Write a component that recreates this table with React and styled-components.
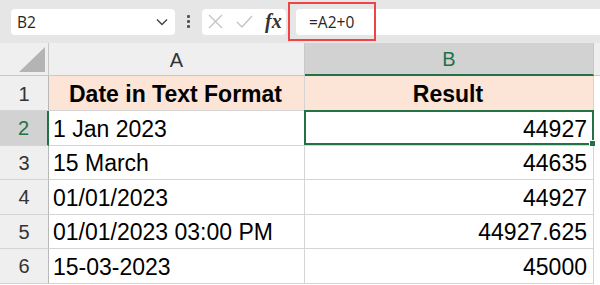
import React from "react";
import styled, { createGlobalStyle } from "styled-components";

const Global = createGlobalStyle`
  html, body { margin: 0; padding: 0; background: #fff; }
  body { width: 600px; height: 285px; overflow: hidden; }
`;

const Page = styled.div`
  position: relative;
  width: 600px;
  height: 285px;
  background: #fff;
  font-family: "Liberation Sans", Arial, sans-serif;
`;

const Toolbar = styled.div`
  display: flex;
  align-items: center;
  height: 43px;
  padding-left: 11px;
  background: #e6e6e6;
  font-family: "Open Sans", "Noto Sans", sans-serif;
`;

const NameBox = styled.div`
  display: flex;
  align-items: center;
  justify-content: space-between;
  box-sizing: border-box;
  width: 164px;
  height: 26px;
  padding: 0 7px 0 6px;
  background: #fff;
  border-radius: 4px;
  font-size: 15.5px;
  color: #262626;
`;

const Dots = styled.div`
  display: flex;
  flex-direction: column;
  align-items: center;
  gap: 2px;
  width: 27px;
  span {
    width: 3px;
    height: 3px;
    border-radius: 1px;
    background: #555;
  }
`;

const FxGroup = styled.div`
  display: flex;
  align-items: center;
  box-sizing: border-box;
  width: 84px;
  height: 26px;
  padding-left: 6px;
  gap: 13px;
  background: #fff;
  border-radius: 4px;
`;

const Fx = styled.span`
  font-family: "Liberation Serif", "Times New Roman", serif;
  font-style: italic;
  font-weight: 700;
  font-size: 20px;
  color: #333;
  margin-left: -1px;
`;

const FormulaInput = styled.div`
  flex: 1;
  display: flex;
  align-items: center;
  height: 26px;
  margin-left: 10px;
  padding-left: 13px;
  background: #fff;
  border-radius: 4px 0 0 4px;
  font-size: 15.5px;
  color: #262626;
`;

const Highlight = styled.div`
  position: absolute;
  left: 288px;
  top: 2px;
  width: 88px;
  height: 39px;
  box-sizing: border-box;
  border: 2px solid #ee4347;
  pointer-events: none;
`;

const Sheet = styled.div`
  display: grid;
  grid-template-columns: 49px 256px 289px 1fr;
  grid-template-rows: 33px 35px repeat(5, 34.5px);
`;

const Corner = styled.div`
  position: relative;
  background: #efefef;
  border-right: 1px solid #c8c8c8;
  border-bottom: 1px solid #c8c8c8;
  box-sizing: border-box;
`;

const ColHead = styled.div`
  display: flex;
  align-items: center;
  justify-content: center;
  box-sizing: border-box;
  padding-top: 2px;
  font-size: 20px;
  background: ${(p) => (p.$active ? "#d2d2d2" : "#efefef")};
  color: ${(p) => (p.$active ? "#217346" : "#333")};
  border-right: 1px solid #c8c8c8;
  border-bottom: ${(p) => (p.$active ? "2px solid #217346" : "1px solid #c8c8c8")};
`;

const Filler = styled.div`
  box-sizing: border-box;
  background: ${(p) => (p.$head ? "#efefef" : "#fff")};
  border-bottom: ${(p) => (p.$head ? "1px solid #c8c8c8" : "none")};
`;

const RowHead = styled.div`
  display: flex;
  align-items: center;
  justify-content: center;
  box-sizing: border-box;
  padding-top: 2px;
  font-size: 20px;
  background: ${(p) => (p.$active ? "#d2d2d2" : "#efefef")};
  color: ${(p) => (p.$active ? "#217346" : "#333")};
  border-right: ${(p) => (p.$active ? "2px solid #217346" : "1px solid #b8b8b8")};
  border-bottom: 1px solid #d4d4d4;
`;

const Cell = styled.div`
  position: relative;
  display: flex;
  align-items: center;
  box-sizing: border-box;
  padding: 3px 6px 0 4px;
  font-size: 23px;
  color: #000;
  white-space: nowrap;
  justify-content: ${(p) => (p.$head ? "center" : p.$num ? "flex-end" : "flex-start")};
  font-weight: ${(p) => (p.$head ? 700 : 400)};
  background: ${(p) => (p.$head ? "#fce4d6" : "#fff")};
  border-right: 1px solid #d4d4d4;
  border-bottom: 1px solid #d4d4d4;
`;

const Selection = styled.div`
  position: absolute;
  inset: -1px -1px 0 -1px;
  border: 2px solid #217346;
  pointer-events: none;
  &::after {
    content: "";
    position: absolute;
    right: -4px;
    bottom: -4px;
    width: 5px;
    height: 5px;
    background: #217346;
    border: 1px solid #fff;
  }
`;

const rows = [
  ["1 Jan 2023", "44927"],
  ["15 March", "44635"],
  ["01/01/2023", "44927"],
  ["01/01/2023 03:00 PM", "44927.625"],
  ["15-03-2023", "45000"],
];

export default function App() {
  return (
    <Page>
      <Global />
      <Toolbar>
        <NameBox>
          B2
          <svg width="12" height="8" viewBox="0 0 12 8">
            <path d="M1 1.5 L6 6.5 L11 1.5" fill="none" stroke="#444" strokeWidth="1.4" />
          </svg>
        </NameBox>
        <Dots>
          <span />
          <span />
          <span />
        </Dots>
        <FxGroup>
          <svg width="15" height="15" viewBox="0 0 15 15">
            <path d="M1 1 L14 14 M14 1 L1 14" stroke="#c2c2c2" strokeWidth="1.3" />
          </svg>
          <svg width="17" height="13" viewBox="0 0 17 13">
            <path d="M1 7 L6 12 L16 1" fill="none" stroke="#c2c2c2" strokeWidth="1.3" />
          </svg>
          <Fx>fx</Fx>
        </FxGroup>
        <FormulaInput>=A2+0</FormulaInput>
      </Toolbar>
      <Highlight />
      <Sheet>
        <Corner>
          <svg
            width="26"
            height="25"
            viewBox="0 0 26 25"
            style={{ position: "absolute", right: 3, bottom: 3 }}
          >
            <path d="M26 0 L26 25 L0 25 Z" fill="#b4b4b4" />
          </svg>
        </Corner>
        <ColHead>A</ColHead>
        <ColHead $active>B</ColHead>
        <Filler $head />

        <RowHead>1</RowHead>
        <Cell $head>Date in Text Format</Cell>
        <Cell $head>Result</Cell>
        <Filler />

        {rows.map(([date, value], i) => (
          <React.Fragment key={i}>
            <RowHead $active={i === 0}>{i + 2}</RowHead>
            <Cell>{date}</Cell>
            <Cell $num>
              {value}
              {i === 0 && <Selection />}
            </Cell>
            <Filler />
          </React.Fragment>
        ))}
      </Sheet>
    </Page>
  );
}
